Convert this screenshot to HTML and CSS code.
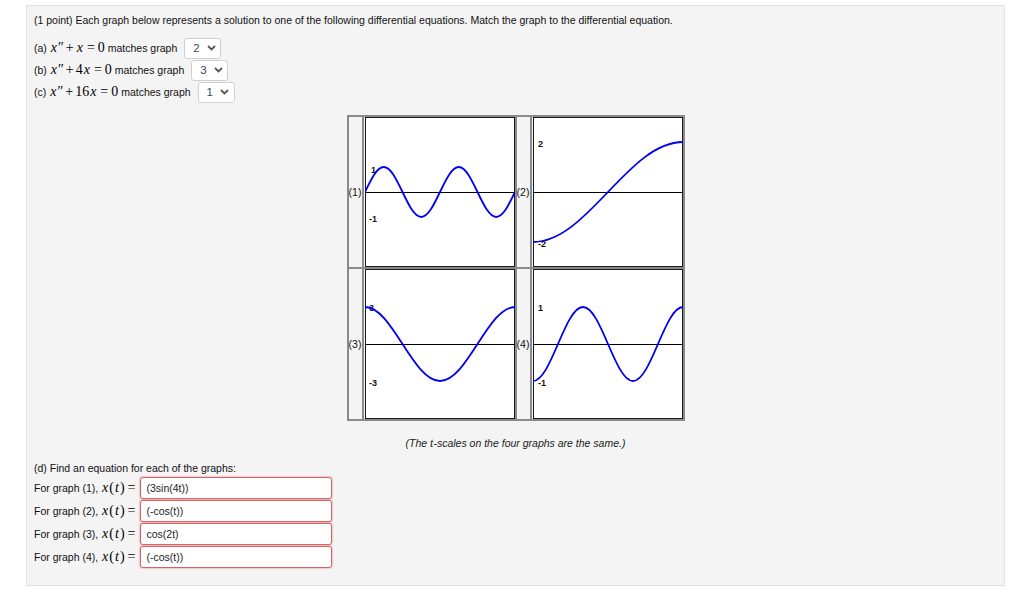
FILE: index.html
```html
<!DOCTYPE html>
<html>
<head>
<meta charset="utf-8">
<link rel="stylesheet" href="styles.css">
</head>
<body>
<div class="problem">
  <p class="title">(1 point) Each graph below represents a solution to one of the following differential equations. Match the graph to the differential equation.</p>
  <div class="parts">
    <div class="part">(a) <span class="m"><i>x</i>″<span class="op">+</span><i>x</i><span class="rel">=</span>0</span> matches graph <span class="sel"><span class="val">2</span><svg width="9" height="6" viewBox="0 0 9 6"><path d="M1,1 L4.5,4.5 L8,1" fill="none" stroke="#555" stroke-width="1.8"/></svg></span></div>
    <div class="part">(b) <span class="m"><i>x</i>″<span class="op">+</span>4<i>x</i><span class="rel">=</span>0</span> matches graph <span class="sel"><span class="val">3</span><svg width="9" height="6" viewBox="0 0 9 6"><path d="M1,1 L4.5,4.5 L8,1" fill="none" stroke="#555" stroke-width="1.8"/></svg></span></div>
    <div class="part">(c) <span class="m"><i>x</i>″<span class="op">+</span>16<i>x</i><span class="rel">=</span>0</span> matches graph <span class="sel"><span class="val">1</span><svg width="9" height="6" viewBox="0 0 9 6"><path d="M1,1 L4.5,4.5 L8,1" fill="none" stroke="#555" stroke-width="1.8"/></svg></span></div>
  </div>

  <div class="graphwrap">
    <div class="gtable">
      <div class="lab">(1)</div>
      <div class="gcell">
        <svg width="150" height="150" viewBox="0 0 150 150">
          <rect x="0.5" y="0.5" width="149" height="149" fill="#fff" stroke="#1a1a1a"/>
          <line x1="0" y1="75.5" x2="150" y2="75.5" stroke="#000"/>
          <path d="M0,75 C6.115,62.19 11.965,50 18.75,50 S31.385,62.19 37.5,75 S49.465,100 56.25,100 S68.885,87.81 75,75 S86.965,50 93.75,50 S106.385,62.19 112.5,75 S124.465,100 131.25,100 S143.885,87.81 150,75" fill="none" stroke="#0000ee" stroke-width="1.8"/>
          <text x="6" y="56" class="gl">1</text>
          <text x="4" y="105" class="gl">-1</text>
        </svg>
      </div>
      <div class="lab">(2)</div>
      <div class="gcell">
        <svg width="150" height="150" viewBox="0 0 150 150">
          <rect x="0.5" y="0.5" width="149" height="149" fill="#fff" stroke="#1a1a1a"/>
          <line x1="0" y1="75.5" x2="150" y2="75.5" stroke="#000"/>
          <path d="M0,125 C27.14,125 50.54,100.6 75,75 S122.86,25 150,25" fill="none" stroke="#0000ee" stroke-width="1.8"/>
          <text x="5" y="30" class="gl">2</text>
          <text x="5" y="130" class="gl">-2</text>
        </svg>
      </div>
      <div class="lab">(3)</div>
      <div class="gcell">
        <svg width="150" height="150" viewBox="0 0 150 150">
          <rect x="0.5" y="0.5" width="149" height="149" fill="#fff" stroke="#1a1a1a"/>
          <line x1="0" y1="75.5" x2="150" y2="75.5" stroke="#000"/>
          <text x="4" y="42" class="gl">3</text>
          <text x="4" y="117" class="gl">-3</text>
          <path d="M0,38 C13.57,38 25.27,56.04 37.5,75 S61.43,112 75,112 S100.27,93.96 112.5,75 S136.43,38 150,38" fill="none" stroke="#0000ee" stroke-width="1.8"/>
        </svg>
      </div>
      <div class="lab">(4)</div>
      <div class="gcell">
        <svg width="150" height="150" viewBox="0 0 150 150">
          <rect x="0.5" y="0.5" width="149" height="149" fill="#fff" stroke="#1a1a1a"/>
          <line x1="0" y1="75.5" x2="150" y2="75.5" stroke="#000"/>
          <text x="5" y="42" class="gl">1</text>
          <text x="5" y="117" class="gl">-1</text>
          <path d="M0,112 C9.05,112 16.85,93.96 25,75 S40.95,38 50,38 S66.85,56.04 75,75 S90.95,112 100,112 S116.85,93.96 125,75 S140.95,38 150,38" fill="none" stroke="#0000ee" stroke-width="1.8"/>
        </svg>
      </div>
    </div>
  </div>
  <p class="caption">(The <span class="mi">t</span>-scales on the four graphs are the same.)</p>

  <p class="dtitle">(d) Find an equation for each of the graphs:</p>
  <div class="answers">
    <div class="arow">For graph (1), <span class="m"><i>x</i>(<i>t</i>)<span class="rel">=</span></span><input class="ans" type="text" value="(3sin(4t))"></div>
    <div class="arow">For graph (2), <span class="m"><i>x</i>(<i>t</i>)<span class="rel">=</span></span><input class="ans" type="text" value="(-cos(t))"></div>
    <div class="arow">For graph (3), <span class="m"><i>x</i>(<i>t</i>)<span class="rel">=</span></span><input class="ans" type="text" value="cos(2t)"></div>
    <div class="arow">For graph (4), <span class="m"><i>x</i>(<i>t</i>)<span class="rel">=</span></span><input class="ans" type="text" value="(-cos(t))"></div>
  </div>
</div>
</body>
</html>
```

FILE: styles.css
```css
html, body {
  margin: 0;
  padding: 0;
  background: #fff;
}
body {
  font-family: "Liberation Sans", Arial, sans-serif;
  font-size: 10.5px;
  color: #111;
}
.problem {
  box-sizing: border-box;
  margin: 5px 0 0 26px;
  width: 979px;
  height: 581px;
  background: #f4f4f4;
  border: 1px solid #e2e2e2;
  padding: 0 7px;
}
p { margin: 0; }
.title {
  margin-top: 8px;
  line-height: 13px;
}
.parts {
  margin-top: 10px;
  display: flex;
  flex-direction: column;
}
.part {
  height: 22px;
  display: flex;
  align-items: center;
  white-space: pre;
}
.m {
  font-family: "Liberation Serif", "Times New Roman", serif;
  font-size: 14px;
  color: #000;
}
.m i {
  font-style: italic;
  padding: 0 1px;
}
.op { margin: 0 2px; }
.rel { margin: 0 3px; }
.sel {
  box-sizing: border-box;
  margin-left: 4px;
  height: 21px;
  width: 37px;
  background: #fff;
  border: 1px solid #d0d0d0;
  border-radius: 3px;
  display: flex;
  align-items: center;
  padding: 0 0 0 8px;
  gap: 7px;
  font-size: 11.5px;
  color: #3a4a66;
}
.sel svg { display: block; }
.graphwrap {
  margin-top: 12px;
  display: flex;
  justify-content: center;
}
.gtable {
  display: grid;
  grid-template-columns: auto auto auto auto;
  border: 1px solid #8a8a8a;
}
.lab {
  width: 13px;
  border: 1px solid #8a8a8a;
  display: flex;
  align-items: center;
  justify-content: center;
  color: #111;
}
.gcell {
  border: 1px solid #8a8a8a;
  padding: 0 0 0 1px;
}
.gcell svg { display: block; }
.gl {
  font-family: "Liberation Sans", Arial, sans-serif;
  font-size: 9px;
  font-weight: bold;
  fill: #111;
}
.caption {
  margin-top: 16px;
  line-height: 13px;
  text-align: center;
  font-style: italic;
  color: #222;
}
.mi {
  font-family: "Liberation Serif", serif;
  font-size: 12px;
  font-style: italic;
}
.dtitle {
  margin-top: 12px;
  line-height: 13px;
}
.answers {
  margin-top: 1px;
  display: flex;
  flex-direction: column;
}
.arow {
  height: 23px;
  display: flex;
  align-items: center;
  white-space: pre;
}
.ans {
  box-sizing: border-box;
  margin-left: 2px;
  width: 192px;
  height: 22px;
  border: 1px solid #d46464;
  border-radius: 3px;
  box-shadow: 0 0 1px 1px rgba(230, 150, 150, 0.45);
  background: #fff;
  padding: 0 5px;
  font-family: "Liberation Sans", Arial, sans-serif;
  font-size: 10.5px;
  color: #222;
  outline: none;
}
```
